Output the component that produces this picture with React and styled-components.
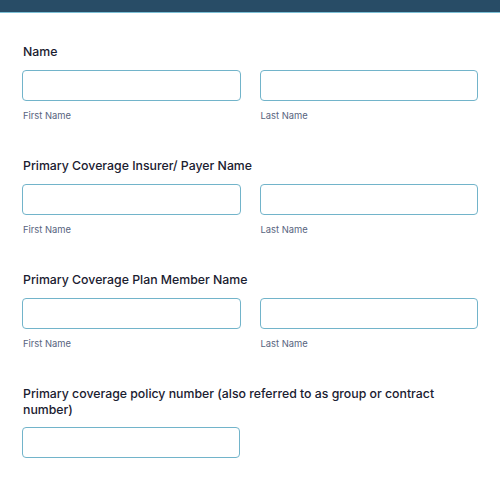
import styled, { createGlobalStyle } from 'styled-components';

const GlobalStyle = createGlobalStyle`
  body {
    margin: 0;
    background: #fff;
    font-family: Inter, "Liberation Sans", sans-serif;
  }
`;

const TopBar = styled.div`
  height: 12px;
  background: #284c66;
  border-bottom: 1px solid #7cc0d6;
`;

const Form = styled.form`
  padding: 31px 22px 0 22px;
  display: flex;
  flex-direction: column;
  gap: 36px;
`;

const Field = styled.div`
  display: flex;
  flex-direction: column;
`;

const Label = styled.label`
  font-size: 12.3px;
  font-weight: 500;
  line-height: 16px;
  color: #1a2030;
  margin: 0 0 ${(p) => (p.$multi ? '9px' : '10px')} 1px;
  padding-right: 20px;
`;

const Row = styled.div`
  display: grid;
  grid-template-columns: 1fr 1fr;
  column-gap: 19px;
`;

const Cell = styled.div`
  display: flex;
  flex-direction: column;
`;

const Input = styled.input`
  box-sizing: border-box;
  height: 31px;
  width: ${(p) => (p.$half ? '218px' : '100%')};
  border: 1.5px solid #72b4ca;
  border-radius: 4px;
  background: #fff;
  outline: none;
  padding: 0 10px;
  font: inherit;
`;

const SubLabel = styled.span`
  margin-top: 9px;
  margin-left: 1px;
  font-size: 9.4px;
  line-height: 12px;
  color: #57647e;
`;

const NameField = ({ label }) => (
  <Field>
    <Label>{label}</Label>
    <Row>
      <Cell>
        <Input type="text" />
        <SubLabel>First Name</SubLabel>
      </Cell>
      <Cell>
        <Input type="text" />
        <SubLabel>Last Name</SubLabel>
      </Cell>
    </Row>
  </Field>
);

export default function App() {
  return (
    <>
      <GlobalStyle />
      <TopBar />
      <Form>
        <NameField label="Name" />
        <NameField label="Primary Coverage Insurer/ Payer Name" />
        <NameField label="Primary Coverage Plan Member Name" />
        <Field>
          <Label $multi>
            Primary coverage policy number (also referred to as group or contract number)
          </Label>
          <Input type="text" $half />
        </Field>
      </Form>
    </>
  );
}
